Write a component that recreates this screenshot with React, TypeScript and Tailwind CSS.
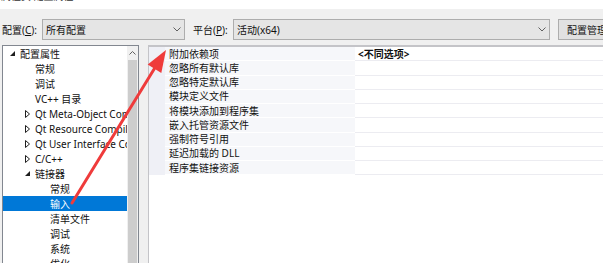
import React from 'react';

type TreeItem = { label: string; level: number; icon?: 'open' | 'closed'; selected?: boolean };

const tree: TreeItem[] = [
  { label: '配置属性', level: 0, icon: 'open' },
  { label: '常规', level: 1 },
  { label: '调试', level: 1 },
  { label: 'VC++ 目录', level: 1 },
  { label: 'Qt Meta-Object Compiler', level: 1, icon: 'closed' },
  { label: 'Qt Resource Compiler', level: 1, icon: 'closed' },
  { label: 'Qt User Interface Compiler', level: 1, icon: 'closed' },
  { label: 'C/C++', level: 1, icon: 'closed' },
  { label: '链接器', level: 1, icon: 'open' },
  { label: '常规', level: 2 },
  { label: '输入', level: 2, selected: true },
  { label: '清单文件', level: 2 },
  { label: '调试', level: 2 },
  { label: '系统', level: 2 },
  { label: '优化', level: 2 },
];

const props = [
  '附加依赖项',
  '忽略所有默认库',
  '忽略特定默认库',
  '模块定义文件',
  '将模块添加到程序集',
  '嵌入托管资源文件',
  '强制符号引用',
  '延迟加载的 DLL',
  '程序集链接资源',
];

const Chevron = () => (
  <svg width="8" height="5" viewBox="0 0 8 5" className="shrink-0">
    <polyline points="0.5,0.5 4,4 7.5,0.5" fill="none" stroke="#606060" strokeWidth="1" />
  </svg>
);

const TreeIcon = ({ kind, selected }: { kind?: 'open' | 'closed'; selected?: boolean }) => {
  if (!kind) return null;
  const color = selected ? '#ffffff' : '#1e1e1e';
  if (kind === 'open')
    return (
      <svg width="5" height="5" viewBox="0 0 5 5" className="ml-[5px]">
        <polygon points="5,0 5,5 0,5" fill={color} />
      </svg>
    );
  return (
    <svg width="5" height="8" viewBox="0 0 5 8" className="ml-[5px]">
      <polygon points="0.5,0.5 4.5,4 0.5,7.5" fill="none" stroke={color} strokeWidth="1" />
    </svg>
  );
};

export default function App() {
  return (
    <div className="relative w-[603px] h-[263px] overflow-hidden bg-[#f0f0f0] text-[10px] text-[#111] font-['Noto_Sans','Noto_Sans_CJK_SC',sans-serif]">
      {/* title bar remnant */}
      <div className="h-[9px] bg-white overflow-hidden">
        <div className="-mt-[10px] pl-[1px] leading-[12px] text-[#333] whitespace-nowrap">属性页 配置属性</div>
      </div>

      {/* toolbar */}
      <div className="mt-[10px] h-[21px] flex items-center whitespace-nowrap">
        <span className="ml-[2px] w-[40px] shrink-0 leading-none">
          配置(<span className="underline">C</span>):
        </span>
        <div className="w-[143px] h-[21px] shrink-0 flex items-center justify-between bg-[#e5e5e5] border border-[#adadad] pl-[3px] pr-[3px]">
          <span className="leading-none">所有配置</span>
          <Chevron />
        </div>
        <span className="ml-[8px] w-[40px] shrink-0 leading-none">
          平台(<span className="underline">P</span>):
        </span>
        <div className="w-[317px] h-[21px] shrink-0 flex items-center justify-between bg-[#e5e5e5] border border-[#adadad] pl-[3px] pr-[3px]">
          <span className="leading-none">活动(x64)</span>
          <Chevron />
        </div>
        <div className="ml-[8px] w-[70px] h-[21px] shrink-0 flex items-center bg-[#e1e1e1] border border-[#adadad] pl-[8px]">
          <span className="leading-none">配置管理器(O)...</span>
        </div>
      </div>

      {/* panels */}
      <div className="mt-[5px] flex h-[230px]">
        {/* tree */}
        <div className="ml-[2px] w-[137px] h-[240px] shrink-0 flex border border-[#828790] bg-white">
          <div className="w-[124px] overflow-hidden">
            {tree.map((t, i) => (
              <div
                key={i}
                className={`h-[15px] flex items-center whitespace-nowrap ${t.selected ? 'bg-[#0078d7] text-white' : ''}`}
                style={{ paddingLeft: 2 + 15 * t.level }}
              >
                <div className="w-[15px] shrink-0 flex items-center">
                  <TreeIcon kind={t.icon} selected={t.selected} />
                </div>
                <span className="leading-none">{t.label}</span>
              </div>
            ))}
          </div>
          <div className="w-[11px] flex flex-col bg-[#f0f0f0]">
            <div className="h-[14px] flex items-center justify-center">
              <svg width="7" height="4" viewBox="0 0 7 4">
                <polyline points="0.5,3.5 3.5,0.5 6.5,3.5" fill="none" stroke="#606060" strokeWidth="1" />
              </svg>
            </div>
            <div className="flex-1 mx-[1px] bg-[#cdcdcd]" />
          </div>
        </div>

        {/* property grid */}
        <div className="ml-[9px] flex-1 border-l border-t-2 border-[#c4c4c8] bg-white">
          {props.map((p, i) => (
            <div key={i} className="flex h-[14.25px]">
              <div className="w-[16px] shrink-0 bg-[#eff0f6]" />
              <div className="w-[190px] shrink-0 flex items-center pl-[4px] bg-[#f6f7fa] border-b border-white">
                <span className="leading-none whitespace-nowrap">{p}</span>
              </div>
              <div className="flex-1 flex items-center pl-[3px] border-b border-[#ececf1]">
                {i === 0 && <span className="leading-none font-bold">&lt;不同选项&gt;</span>}
              </div>
            </div>
          ))}
        </div>
      </div>

      {/* red annotation arrow */}
      <svg className="absolute left-0 top-0 pointer-events-none" width="603" height="263">
        <line x1="72" y1="203" x2="156" y2="66" stroke="#ef3b3b" strokeWidth="3" strokeLinecap="round" />
        <polygon points="166,50 147.7,64.5 161.3,72.9" fill="#ef3b3b" />
      </svg>
    </div>
  );
}
